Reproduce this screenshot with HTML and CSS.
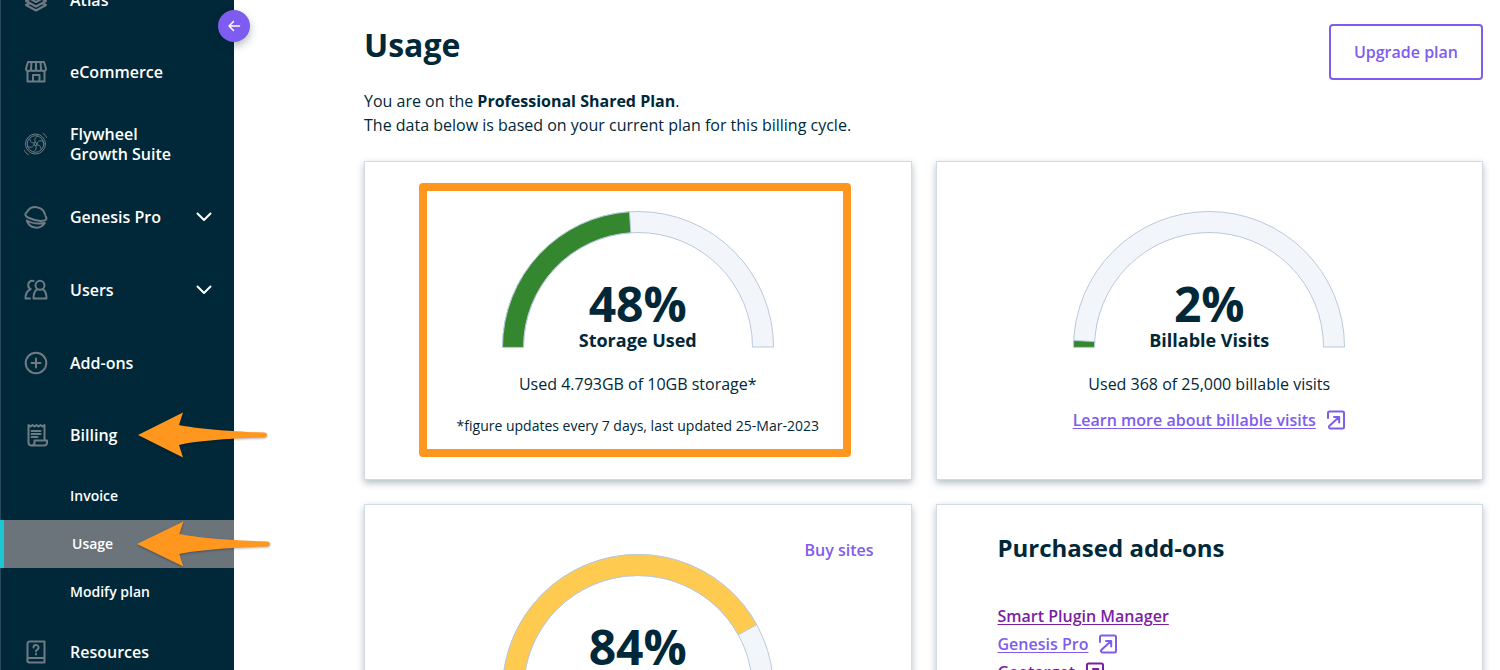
FILE: index.html
```
<!DOCTYPE html>
<html lang="en">
    <head>
        <meta charset="utf-8">
        <meta name="viewport" content="width=device-width, initial-scale=1">
        <title>Usage</title>
        <link rel="stylesheet" href="styles.css">
    </head>
    <body>
        <!-- Shared icons -->
        <svg class="sprite" aria-hidden="true">
            <symbol id="chevron" viewBox="0 0 16 16">
                <path d="M1.500 4.500 8 11l6.500-6.500"/>
            </symbol>
            <symbol id="external" viewBox="0 0 20 20">
                <path d="M2 8V3a1.500 1.500 0 0 1 1.500-1.500h13A1.500 1.500 0 0 1 18 3v14a1.500 1.500 0 0 1-1.500 1.500h-12A1.500 1.500 0 0 1 3.300 16L13 7M8 7h5.200v5.500"/>
            </symbol>
            <symbol id="arrow" viewBox="0 0 130 46" preserveAspectRatio="none">
                <path d="M0 23 45 .5 41 13C58 16.500 90 19.500 126 20.500Q129 20.500 129 23T126 25.500C90 26.500 58 29 41 33L45 45.500Z"/>
            </symbol>
        </svg>
        <div class="app">
            <aside class="sidebar">
                <button class="collapse" aria-label="Collapse menu">
                    <svg viewBox="0 0 16 16"><path d="M13.500 8H3M7.500 3.500 3 8l4.500 4.500"/></svg>
                </button>
                <nav>
                    <ul class="menu">
                        <li>
                            <a class="item" href="#">
                                <svg class="icon" viewBox="0 0 24 24"><path d="M12 3 22 8.500 12 14 2 8.500ZM5 11.500 2 13l10 5.500L22 13l-3-1.500M5 15.500 2 17l10 5.500L22 17l-3-1.500"/></svg>
                                <span>Atlas</span>
                            </a>
                        </li>
                        <li>
                            <a class="item" href="#">
                                <svg class="icon" viewBox="0 0 24 24"><path d="M4 2h16l2 6.500a2.500 2.500 0 0 1-5 0 2.500 2.500 0 0 1-5 0 2.500 2.500 0 0 1-5 0 2.500 2.500 0 0 1-5 0ZM7.500 2 7 8.500M12 2v6.500M16.500 2l.5 6.500M3.500 11v10.500h17V11M9 21.500V15h6.500v6.500"/></svg>
                                <span>eCommerce</span>
                            </a>
                        </li>
                        <li>
                            <a class="item" href="#">
                                <svg class="icon thin" viewBox="0 0 24 24"><circle cx="11.500" cy="12" r="10"/><circle cx="11.500" cy="12" r="8.300"/><circle cx="11.500" cy="12" r="1.500"/><path d="M11.500 10.500C10 8 11 6 13.500 4M13 11.500c1-3 3-3.500 6-2M12.500 13.200c3-.5 4.500 1 4.500 4M11.500 13.500c1.500 2.500.5 4.500-2 6.500M10 12.500c-1 3-3 3.500-6 2M10.500 10.800C7.500 11.300 6 10 6 7M19 1.500c1.800 1 3 2.300 3.500 4M.5 18.500c.8 2 2 3.200 4 4"/></svg>
                                <span>Flywheel<br>Growth Suite</span>
                            </a>
                        </li>
                        <li>
                            <a class="item tall" href="#">
                                <svg class="icon" viewBox="0 0 24 24"><path d="M21 9.500A9.800 9.800 0 0 0 3 7C.3 9 1 11.300 5 13c5 2.300 11 3.500 15.500 2.500 2.300-.6 2.500-2.500 1-4.500M2.800 15.500a10 10 0 0 0 18 2.500C14.500 19 7.500 18.300 2.800 15.500Z"/></svg>
                                <span>Genesis Pro</span>
                                <svg class="chevron"><use href="#chevron"/></svg>
                            </a>
                        </li>
                        <li>
                            <a class="item tall" href="#">
                                <svg class="icon" viewBox="0 0 24 24"><circle cx="16" cy="7.300" r="4.500"/><path d="M13.200 11.200C10.500 13 9.500 16 9.500 20.500h13c0-4.500-1-7.500-3.700-9.300M9.500 3C6.500 2 4.200 4.300 4.200 7c0 2 1 3.500 2.500 4.200C3 12.500 1.500 15.500 1.500 20.500H6"/></svg>
                                <span>Users</span>
                                <svg class="chevron"><use href="#chevron"/></svg>
                            </a>
                        </li>
                        <li>
                            <a class="item tall" href="#">
                                <svg class="icon" viewBox="0 0 24 24"><circle cx="12" cy="12" r="10.300"/><path d="M12 7.500v9M7.500 12h9"/></svg>
                                <span>Add-ons</span>
                            </a>
                        </li>
                        <li>
                            <a class="item" href="#">
                                <svg class="icon" viewBox="0 0 24 24"><path d="M20.500 17V2l-2 1.500-2-1.500-2 1.500-2-1.500-2 1.500-2-1.500-2 1.500-2-1.500v17.500a3 3 0 0 0 3 3h12.500a3 3 0 0 0 3-3V17.500H10.500v2a3 3 0 0 1-3 3M7.500 8h9M7.500 11h9M7.500 14h6"/></svg>
                                <span>Billing</span>
                            </a>
                            <svg class="arrow"><use href="#arrow"/></svg>
                            <ul class="submenu">
                                <li><a href="#">Invoice</a></li>
                                <li>
                                    <a class="active" href="#" aria-current="page">Usage</a>
                                    <svg class="arrow"><use href="#arrow"/></svg>
                                </li>
                                <li><a href="#">Modify plan</a></li>
                            </ul>
                        </li>
                        <li>
                            <a class="item" href="#">
                                <svg class="icon" viewBox="0 0 24 24"><path d="M3.500 20V3.500a2 2 0 0 1 2-2h15v16.500H5.500a2.200 2.200 0 0 0 0 4.500h15V18M9.500 7.500a2.500 2.500 0 1 1 3.500 2.300c-.8.4-1 .8-1 1.700M12 14v.5"/></svg>
                                <span>Resources</span>
                            </a>
                        </li>
                    </ul>
                </nav>
            </aside>
            <main>
                <header>
                    <div>
                        <h1>Usage</h1>
                        <p>You are on the <strong>Professional Shared Plan</strong>.<br>The data below is based on your current plan for this billing cycle.</p>
                    </div>
                    <button class="upgrade">Upgrade plan</button>
                </header>
                <div class="cards">
                    <section class="card">
                        <div class="gauge">
                            <svg viewBox="0 0 272 138">
                                <path class="track" d="M.5 137A135.500 135.500 0 0 1 271.500 137H250.500A114.500 114.500 0 0 0 21.500 137Z"/>
                                <path class="good" d="M.5 137A135.500 135.500 0 0 1 127.500 1.800L128.800 22.700A114.500 114.500 0 0 0 21.500 137Z"/>
                            </svg>
                            <strong>48%</strong>
                            <h2>Storage Used</h2>
                        </div>
                        <p>Used 4.793GB of 10GB storage*</p>
                        <p class="note">*figure updates every 7 days, last updated 25-Mar-2023</p>
                        <div class="highlight"></div>
                    </section>
                    <section class="card">
                        <div class="gauge">
                            <svg viewBox="0 0 272 138">
                                <path class="track" d="M.5 137A135.500 135.500 0 0 1 271.500 137H250.500A114.500 114.500 0 0 0 21.500 137Z"/>
                                <path class="good" d="M.5 137 .7 130.500 21.700 131.500 21.500 137Z"/>
                            </svg>
                            <strong>2%</strong>
                            <h2>Billable Visits</h2>
                        </div>
                        <p>Used 368 of 25,000 billable visits</p>
                        <a class="link" href="#">
                            <span>Learn more about billable visits</span>
                            <svg><use href="#external"/></svg>
                        </a>
                    </section>
                    <section class="card">
                        <a class="buy" href="#">Buy sites</a>
                        <div class="gauge">
                            <svg viewBox="0 0 272 138">
                                <path class="track" d="M.5 137A135.500 135.500 0 0 1 271.500 137H250.500A114.500 114.500 0 0 0 21.500 137Z"/>
                                <path class="warn" d="M.5 137A135.500 135.500 0 0 1 254.700 71.700L236.300 81.800A114.500 114.500 0 0 0 21.500 137Z"/>
                            </svg>
                            <strong>84%</strong>
                        </div>
                    </section>
                    <section class="card addons">
                        <h2>Purchased add-ons</h2>
                        <ul>
                            <li><a class="link visited" href="#"><span>Smart Plugin Manager</span></a></li>
                            <li><a class="link" href="#"><span>Genesis Pro</span><svg><use href="#external"/></svg></a></li>
                            <li><a class="link visited" href="#"><span>Geotarget</span><svg><use href="#external"/></svg></a></li>
                        </ul>
                    </section>
                </div>
            </main>
        </div>
    </body>
</html>
```
FILE: styles.css
```
* {
    box-sizing: border-box;
}
body {
    margin: 0;
    font-family: "Open Sans", sans-serif;
    font-size: 16px;
    line-height: 24px;
    color: #002838;
    background-color: #fff;
}
h1, h2, p, ul {
    margin: 0;
    padding: 0;
}
ul {
    list-style: none;
}
a {
    color: inherit;
    text-decoration: none;
}
button {
    font: inherit;
    cursor: pointer;
}
svg {
    fill: none;
    stroke: currentColor;
    stroke-linecap: round;
    stroke-linejoin: round;
}
.sprite {
    display: none;
}
.app {
    display: flex;
    height: 100vh;
    overflow: hidden;
}

/* Sidebar */
.sidebar {
    position: relative;
    flex: 0 0 234px;
    color: #fff;
    background-color: #002838;
    border-left: 1px solid #2b4a59;
    font-weight: 600;
}
.collapse {
    position: absolute;
    z-index: 1;
    top: 10px;
    right: -16px;
    display: flex;
    align-items: center;
    justify-content: center;
    width: 32px;
    height: 32px;
    padding: 0;
    border: 0;
    border-radius: 50%;
    color: #fff;
    background-color: #7e5cef;
    box-shadow: 0 4px 8px rgba(0, 40, 56, 0.3);
}
.collapse svg {
    width: 16px;
    height: 16px;
    stroke-width: 1.5;
}
/* Scrolled so the first item is half out of view */
.menu {
    margin-top: -36px;
}
.menu li {
    position: relative;
}
.item {
    display: flex;
    align-items: center;
    gap: 22px;
    height: 72px;
    padding: 0 22px 0 23px;
    line-height: 20px;
}
.item.tall {
    height: 73px;
}
.icon {
    flex: none;
    width: 24px;
    height: 24px;
    color: #6f7b83;
    stroke-width: 2;
}
.icon.thin {
    stroke-width: 1;
}
.chevron {
    width: 16px;
    height: 16px;
    margin-left: auto;
    stroke-width: 2;
}
.submenu {
    padding-top: 1px;
}
.submenu a {
    display: flex;
    align-items: center;
    height: 48px;
    margin-left: -1px;
    padding-left: 70px;
    font-size: 14px;
}
.submenu .active {
    padding-left: 68px;
    border-left: 4px solid #1cc6d2;
    background-color: #6b747b;
}
.arrow {
    position: absolute;
    z-index: 1;
    top: 13px;
    left: 137px;
    width: 130px;
    height: 46px;
    fill: #ff961e;
    stroke: none;
    filter: drop-shadow(0 1px 1px rgba(0, 0, 0, 0.3));
}
.submenu .arrow {
    top: 1px;
    left: 136px;
    width: 134px;
}

/* Page */
main {
    flex: 1;
    padding: 24px 17px 0 130px;
}
header {
    display: flex;
    align-items: flex-start;
    justify-content: space-between;
    margin-bottom: 24px;
}
h1 {
    margin-bottom: 23px;
    font-size: 32px;
    line-height: 42px;
}
.upgrade {
    height: 56px;
    padding: 0 23px;
    border: 2px solid #7e5cef;
    border-radius: 4px;
    color: #7e5cef;
    background-color: #fff;
    font-weight: 600;
}
.cards {
    display: grid;
    grid-template-columns: 1fr 1fr;
    gap: 24px;
}
.card {
    position: relative;
    display: flex;
    flex-direction: column;
    align-items: center;
    min-height: 319px;
    padding-top: 48px;
    border: 1px solid #d0dce3;
    background-color: #fff;
    box-shadow: 0 3px 7px rgba(0, 40, 56, 0.3);
}
.gauge {
    display: grid;
    justify-items: center;
    margin-bottom: 20px;
}
.gauge svg {
    grid-area: 1 / 1;
    width: 272px;
    height: 138px;
    stroke: #b9c9dc;
}
.gauge .track {
    fill: #f2f6fa;
}
.gauge .good {
    fill: #35872f;
}
.gauge .warn {
    fill: #ffca50;
}
.gauge strong {
    grid-area: 1 / 1;
    align-self: end;
    margin-bottom: 24px;
    font-size: 48px;
    line-height: 40px;
}
.gauge h2 {
    margin-top: -20px;
    font-size: 18px;
    line-height: 24px;
}
.note {
    margin-top: 18px;
    font-size: 14px;
}
.highlight {
    position: absolute;
    top: 21px;
    left: calc(50% - 219px);
    width: 432px;
    height: 274px;
    border: 8px solid #ff961e;
    border-radius: 4px;
}
.link {
    display: flex;
    align-items: center;
    gap: 10px;
    color: #7e5cef;
    font-weight: 600;
}
.link span {
    text-decoration: underline;
    text-underline-offset: 2px;
}
.link svg {
    width: 20px;
    height: 20px;
    stroke-width: 2;
}
.link.visited {
    color: #7b1fa2;
}
.card > .link {
    margin-top: 12px;
}
.buy {
    position: absolute;
    top: 33px;
    right: 37px;
    color: #7e5cef;
    font-weight: 600;
}
.addons {
    align-items: flex-start;
    padding: 27px 61px;
}
.addons h2 {
    margin-bottom: 38px;
    font-size: 24px;
    line-height: 32px;
}
.addons li {
    height: 28px;
    display: flex;
    align-items: center;
}
```
